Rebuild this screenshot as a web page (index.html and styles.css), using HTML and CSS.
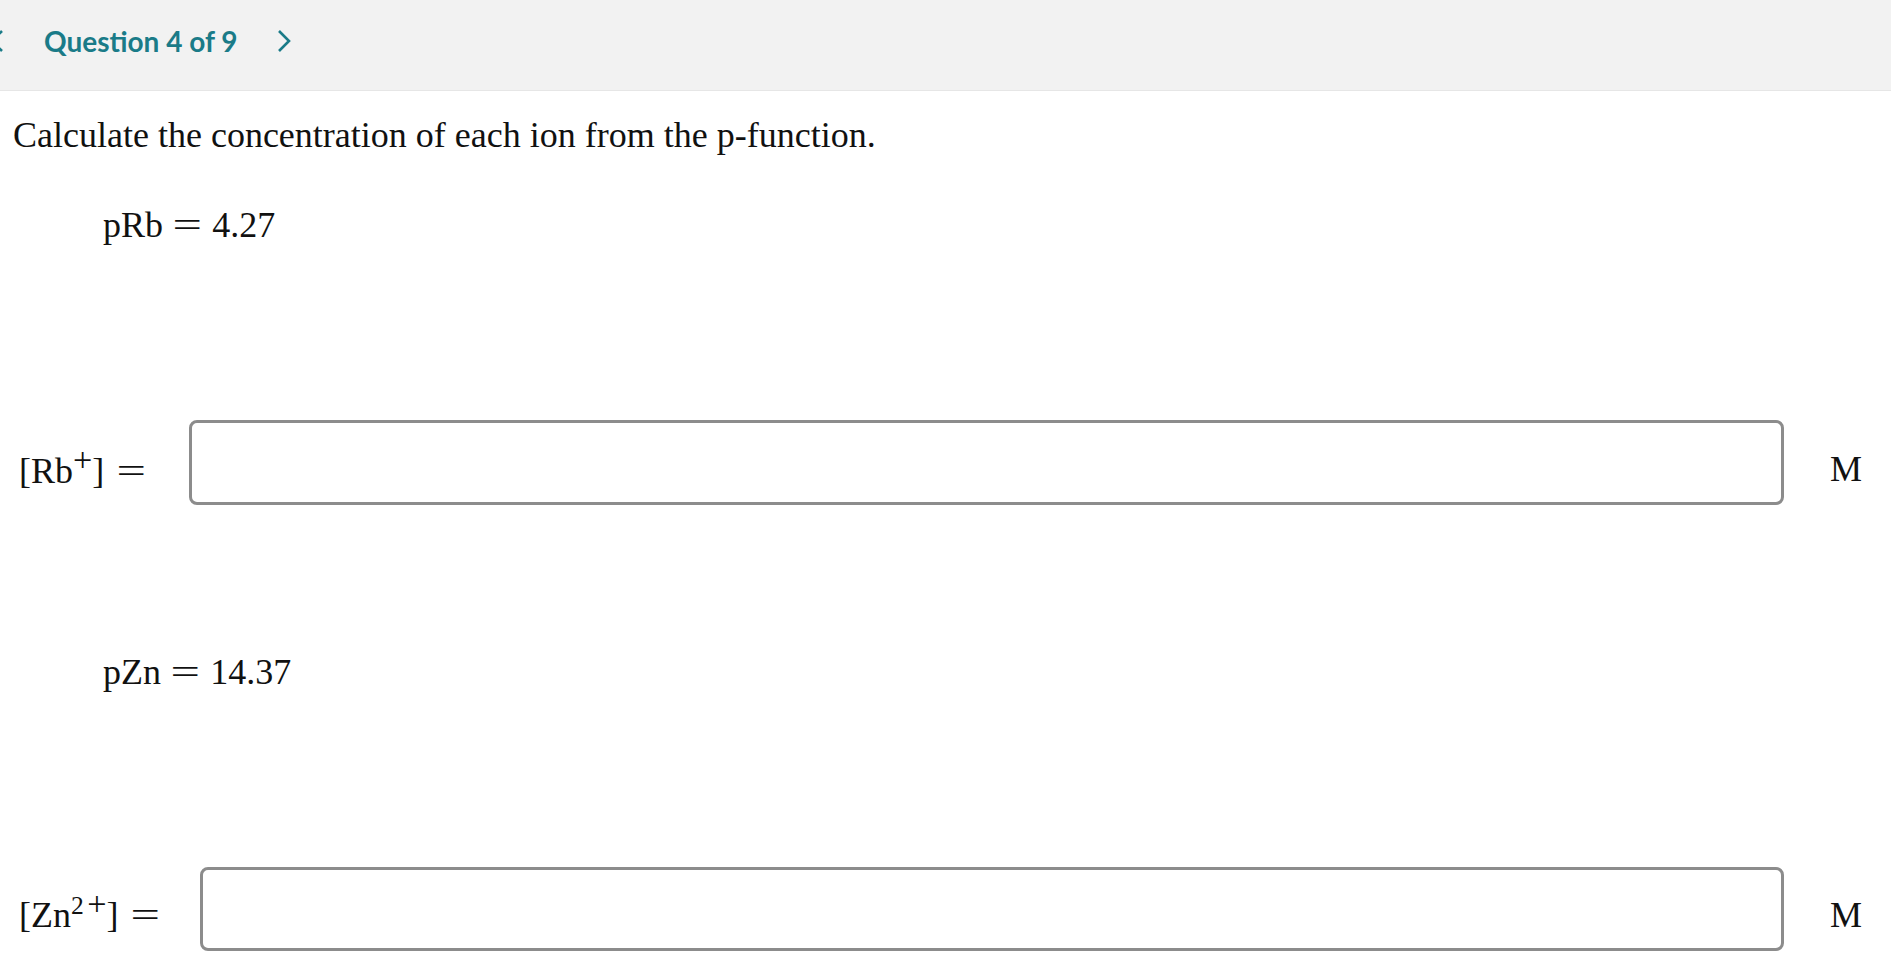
FILE: index.html
```html
<html>
    <head>
        <title>Question 4 of 9</title>
        <link rel="stylesheet" href="styles.css">
    </head>
    <body>
        <header class="topbar">
            <span class="nav prev">
                <svg width="16" height="24" viewBox="0 0 16 24"><path d="M13 2L3 12l10 10" fill="none" stroke="#1a7b88" stroke-width="2.6"/></svg>
            </span>
            <span class="title">Question 4 of 9</span>
            <span class="nav next">
                <svg width="16" height="24" viewBox="0 0 16 24"><path d="M3 2l10 10L3 22" fill="none" stroke="#1a7b88" stroke-width="2.6"/></svg>
            </span>
        </header>
        <div class="question">
            <p class="prompt">Calculate the concentration of each ion from the p-function.</p>

            <div class="given first">pRb<span class="eq">=</span>4.27</div>
            <div class="answer-row">
                <span class="label">[Rb<sup class="charge">+</sup>]<span class="eq">=</span></span>
                <div class="answer-box"></div>
                <span class="unit">M</span>
            </div>

            <div class="given">pZn<span class="eq">=</span>14.37</div>
            <div class="answer-row second">
                <span class="label">[Zn<sup>2</sup><sup class="charge spaced">+</sup>]<span class="eq">=</span></span>
                <div class="answer-box"></div>
                <span class="unit">M</span>
            </div>
        </div>
    </body>
</html>
```

FILE: styles.css
```css
body{
    margin: 0;
    background-color: white;
    font-family: "Liberation Serif", "Times New Roman", serif;
    color: #111;
}
.topbar{
    height: 90px;
    background-color: #f2f2f2;
    border-bottom: 1px solid #e6e6e6;
    display: flex;
    align-items: center;
}
.topbar .nav{
    display: flex;
    margin-top: -8px;
}
.prev{
    margin-left: -11px;
}
.next{
    margin-left: 38px;
}
.title{
    margin-left: 39px;
    margin-top: -8px;
    font-family: Lato, "Open Sans", sans-serif;
    font-weight: bold;
    font-size: 28px;
    color: #1a7b88;
}
.question{
    padding: 0 29px 0 13px;
    font-size: 36px;
    line-height: 41px;
}
.prompt{
    margin: 24px 0 0 0;
}
.given{
    margin-top: 147px;
    padding-left: 90px;
}
.given.first{
    margin-top: 49px;
}
/* wider equals sign, like the math renderer */
.eq{
    display: inline-block;
    margin: 0 15px 0 14px;
    transform: scaleX(1.45);
}
.answer-row{
    display: flex;
    align-items: flex-end;
    margin-top: 174px;
}
.label{
    padding-left: 6px;
    margin-bottom: 13px;
    white-space: nowrap;
}
.label .eq{
    margin: 0 47px 0 17px;
}
sup{
    font-size: 0.71em;
    line-height: 0;
    vertical-align: 0.5em;
}
sup.charge{
    font-size: 0.95em;
    vertical-align: 0.36em;
}
.spaced{
    margin-left: 0.1em;
}
.answer-box{
    flex: 1;
    height: 79px;
    border: 3px solid #8c8c8c;
    border-radius: 8px;
}
.unit{
    margin-left: 46px;
    margin-bottom: 15px;
}
.second .label{
    margin-bottom: 15px;
}
.second .label .eq{
    margin-right: 44px;
}
.second .answer-box{
    height: 78px;
}
```
